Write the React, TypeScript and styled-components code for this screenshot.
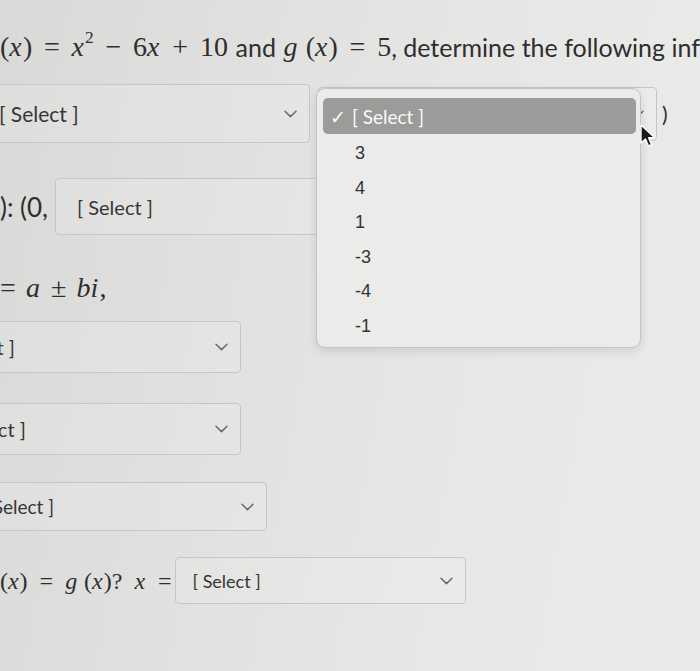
import styled, { createGlobalStyle } from "styled-components";

const Global = createGlobalStyle`
  html, body {
    margin: 0;
    padding: 0;
  }
  body {
    width: 700px;
    height: 671px;
    overflow: hidden;
    background: #e2e2e0;
  }
`;

const Page = styled.main`
  position: relative;
  width: 700px;
  height: 671px;
  overflow: hidden;
  background: linear-gradient(100deg, #d9d9d7 0%, #e1e1df 35%, #e8e8e7 70%, #ebebea 100%);
  font-family: "Lato", "Liberation Sans", sans-serif;
  color: #2e2e2e;
  padding-top: 32px;
  box-sizing: border-box;
`;

const Row = styled.div<{ $top?: number }>`
  display: flex;
  align-items: center;
  white-space: nowrap;
  margin-top: ${(p) => p.$top ?? 0}px;
`;

const Prose = styled.span<{ $size?: number }>`
  font-family: "Lato", "Liberation Sans", sans-serif;
  font-size: ${(p) => p.$size ?? 25}px;
  line-height: 30px;
  color: #2e2e2e;
`;

const Math = styled.span<{ $size?: number; $op?: number }>`
  font-family: "Liberation Serif", "DejaVu Serif", serif;
  font-size: ${(p) => p.$size ?? 28}px;
  line-height: 30px;
  color: #2e2e2e;
  --op: ${(p) => p.$op ?? 0.42}em;
`;

const V = styled.i`
  font-style: italic;
  margin-right: 0.04em;
`;

const Op = styled.span`
  margin: 0 var(--op);
`;

const Sup = styled.sup`
  font-size: 0.62em;
  vertical-align: 0.75em;
  line-height: 0;
`;

const Box = styled.div<{ $w: number; $h: number; $shift?: number; $pad: number; $size: number }>`
  flex: none;
  box-sizing: border-box;
  display: flex;
  align-items: center;
  justify-content: space-between;
  width: ${(p) => p.$w}px;
  height: ${(p) => p.$h}px;
  margin-left: ${(p) => p.$shift ?? 0}px;
  padding: 0 12px 0 ${(p) => p.$pad}px;
  border: 1px solid #c6c6c4;
  border-radius: 4px;
  background: rgba(255, 255, 255, 0.12);
  font-family: "Lato", "Liberation Sans", sans-serif;
  font-size: ${(p) => p.$size}px;
  color: #363636;
`;

const Chevron = () => (
  <svg width="13" height="8" viewBox="0 0 13 8" fill="none">
    <path d="M1 1.2 L6.5 6.6 L12 1.2" stroke="#6a6a6a" strokeWidth="1.5" strokeLinecap="round" strokeLinejoin="round" />
  </svg>
);

type SelectProps = { w: number; h: number; shift?: number; pad: number; size: number; chevron?: boolean };

const Select = ({ w, h, shift, pad, size, chevron = true }: SelectProps) => (
  <Box $w={w} $h={h} $shift={shift} $pad={pad} $size={size}>
    <span>[ Select ]</span>
    {chevron && <Chevron />}
  </Box>
);

const Gap = styled.span<{ $w: number }>`
  display: inline-block;
  width: ${(p) => p.$w}px;
`;

const Menu = styled.ul`
  position: absolute;
  left: 316px;
  top: 88px;
  width: 325px;
  height: 260px;
  box-sizing: border-box;
  margin: 0;
  padding: 9px 4px 9px 6px;
  list-style: none;
  background: #ebebea;
  border: 1px solid #c4c4c2;
  border-radius: 9px;
  box-shadow: 0 3px 10px rgba(0, 0, 0, 0.12);
  font-family: "Liberation Sans", "Noto Sans", sans-serif;
  font-size: 18px;
`;

const Current = styled.li`
  display: flex;
  align-items: center;
  gap: 6px;
  height: 36px;
  padding-left: 7px;
  margin-bottom: 2px;
  border-radius: 5px;
  background: #9b9b9a;
  color: #fafafa;
  font-family: "Lato", "Liberation Sans", sans-serif;
  font-size: 19px;
`;

const Option = styled.li`
  height: 34.6px;
  line-height: 34.6px;
  padding-left: 32px;
  color: #333;
`;

const Cursor = styled.svg`
  position: absolute;
  left: 640px;
  top: 124px;
`;

const options = ["3", "4", "1", "-3", "-4", "-1"];

export default function App() {
  return (
    <>
      <Global />
      <Page>
        <Row>
          <Math>
            (<V>x</V>)<Op>=</Op>
            <V>x</V>
            <Sup>2</Sup>
            <Op>−</Op>6<V>x</V>
            <Op>+</Op>10
          </Math>
          <Gap $w={8} />
          <Prose>and</Prose>
          <Gap $w={8} />
          <Math>
            <V>g</V> (<V>x</V>)<Op>=</Op>5
          </Math>
          <Prose>, determine the following inf</Prose>
        </Row>

        <Row $top={22}>
          <Select w={340} h={59} shift={-30} pad={28} size={21} />
          <Gap $w={8} />
          <Select w={339} h={54} pad={20} size={20} />
          <Gap $w={5} />
          <Prose $size={21}>)</Prose>
        </Row>

        <Row $top={35}>
          <Prose $size={26}>): (0,</Prose>
          <Gap $w={7} />
          <Select w={290} h={57} pad={21} size={20} chevron={false} />
        </Row>

        <Row $top={38}>
          <Math $size={28} $op={0.36}>
            =<Op>
              <V>a</V>
            </Op>
            ±
            <Op>
              <V>bi</V>,
            </Op>
          </Math>
        </Row>

        <Row $top={18}>
          <Select w={322} h={52} shift={-81} pad={19} size={20} />
        </Row>

        <Row $top={30}>
          <Select w={311} h={52} shift={-70} pad={19} size={20} />
        </Row>

        <Row $top={27}>
          <Select w={308} h={49} shift={-41} pad={22} size={19} />
        </Row>

        <Row $top={26}>
          <Math $size={24} $op={0.5}>
            (<V>x</V>)<Op>=</Op>
            <V>g</V> (<V>x</V>)?<Op>
              <V>x</V>
            </Op>
            =
          </Math>
          <Gap $w={3} />
          <Select w={291} h={47} pad={17} size={18} />
        </Row>

        <Menu>
          <Current>
            <span>✓</span>
            <span>[ Select ]</span>
          </Current>
          {options.map((o) => (
            <Option key={o}>{o}</Option>
          ))}
        </Menu>

        <Cursor width="16" height="24" viewBox="0 0 16 24">
          <path d="M1 1 L1 19 L5.5 15 L8.5 22 L11.5 20.6 L8.6 13.8 L14.5 13.6 Z" fill="#1a1a1a" stroke="#fff" strokeWidth="1.4" strokeLinejoin="round" />
        </Cursor>
      </Page>
    </>
  );
}
